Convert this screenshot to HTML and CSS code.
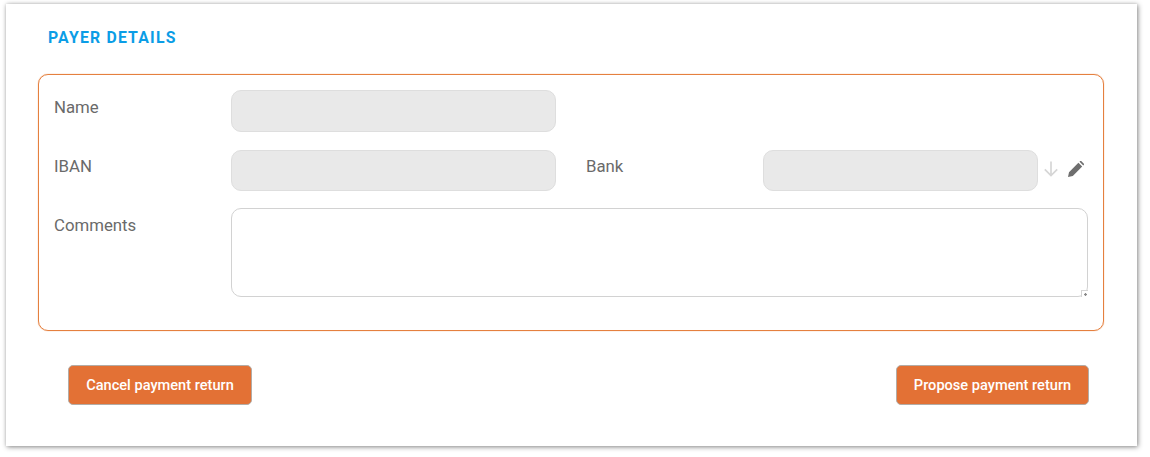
FILE: index.html
```html
<!DOCTYPE html>
<html lang="en">
<head>
<meta charset="utf-8">
<title>Payer details</title>
<link rel="stylesheet" href="styles.css">
</head>
<body>
<main class="card">
  <h2 class="title">PAYER DETAILS</h2>
  <section class="panel">
    <div class="row row-name">
      <label class="label">Name</label>
      <div class="input input-wide"></div>
    </div>
    <div class="row row-iban">
      <label class="label">IBAN</label>
      <div class="input input-wide"></div>
      <label class="label label-bank">Bank</label>
      <div class="input input-bank"></div>
      <svg class="icon-arrow" viewBox="0 0 14 16" width="14" height="16" aria-hidden="true"><path d="M7 0.5V14.5M0.8 8.3 7 14.5l6.2-6.2" fill="none" stroke="#d6d6d6" stroke-width="1.7"/></svg>
      <svg class="icon-pencil" viewBox="0 0 16 16" width="16" height="16" aria-hidden="true"><path fill="#6e6e6e" d="M0 16 1 11.2 10.4 1.8 14.2 5.6 4.8 15zM11.5 0.7 12.2 0Q12.7-.3 13.2 0L15.9 2.7Q16.2 3.2 15.9 3.7L15.3 4.5z"/></svg>
    </div>
    <div class="row row-comments">
      <label class="label">Comments</label>
      <div class="textarea-wrap">
        <textarea class="textarea"></textarea>
      </div>
    </div>
  </section>
  <div class="actions">
    <button class="btn btn-cancel" type="button">Cancel payment return</button>
    <button class="btn btn-propose" type="button">Propose payment return</button>
  </div>
</main>
</body>
</html>
```
FILE: styles.css
```css
* { box-sizing: border-box; }
html, body { margin: 0; background: #fff; }
body {
  padding: 4px 13px 11px 6px;
  font-family: Roboto, "Liberation Sans", sans-serif;
  color: #6a6a6a;
}
.card {
  height: 442px;
  background: #fff;
  box-shadow: 1px 1px 5px rgba(0, 0, 0, 0.45), 0 0 3px rgba(0, 0, 0, 0.1);
  padding: 24px 33px 0 32px;
}
.title {
  margin: 0 0 0 10px;
  height: 46px;
  font-size: 15.8px;
  line-height: 19px;
  font-weight: 700;
  letter-spacing: 1.2px;
  color: #0b9de6;
}
.panel {
  height: 257px;
  border: 1px solid #e5803f;
  box-shadow: 0 0 1px #e5803f;
  border-radius: 10px;
  padding: 15px 15px 0;
}
.row { display: flex; align-items: flex-start; }
.row-name { height: 60px; }
.row-iban { height: 58px; }
.label {
  flex: 0 0 177px;
  font-size: 16.8px;
  line-height: 20px;
  padding-top: 7px;
}
.row-iban .label { padding-top: 6px; }
.label-bank { margin-left: 30px; }
.input {
  background: #e9e9e9;
  border: 1px solid #dedede;
  border-radius: 10px;
}
.input-wide { width: 325px; height: 42px; }
.row-iban .input { height: 41px; }
.input-bank { width: 275px; }
.icon-arrow { margin: 11px 0 0 6px; }
.icon-pencil { margin: 11px 0 0 10px; }
.textarea-wrap { position: relative; width: 857px; height: 89px; }
.textarea-wrap::after {
  content: "";
  position: absolute;
  right: 0;
  bottom: 0;
  width: 6px;
  height: 6px;
  background: radial-gradient(circle at 3.5px 3.5px, #8a8a8a 1px, #fff 1.5px);
  border-left: 1px solid #d4d4d4;
  border-top: 1px solid #d4d4d4;
}
.textarea {
  display: block;
  width: 100%;
  height: 100%;
  border: 1px solid #d2d2d2;
  border-radius: 10px;
  background: #fff;
  margin: 0;
  outline: none;
  resize: none;
}
.actions {
  display: flex;
  justify-content: space-between;
  margin: 34px 15px 0 30px;
}
.btn {
  height: 40px;
  border: 1px solid #b3aca6;
  border-radius: 5px;
  background: #e37135;
  color: #fff;
  font-family: inherit;
  font-size: 14.6px;
  font-weight: 500;
  padding: 0;
}
.btn-cancel { width: 184px; }
.btn-propose { width: 193px; }
```
